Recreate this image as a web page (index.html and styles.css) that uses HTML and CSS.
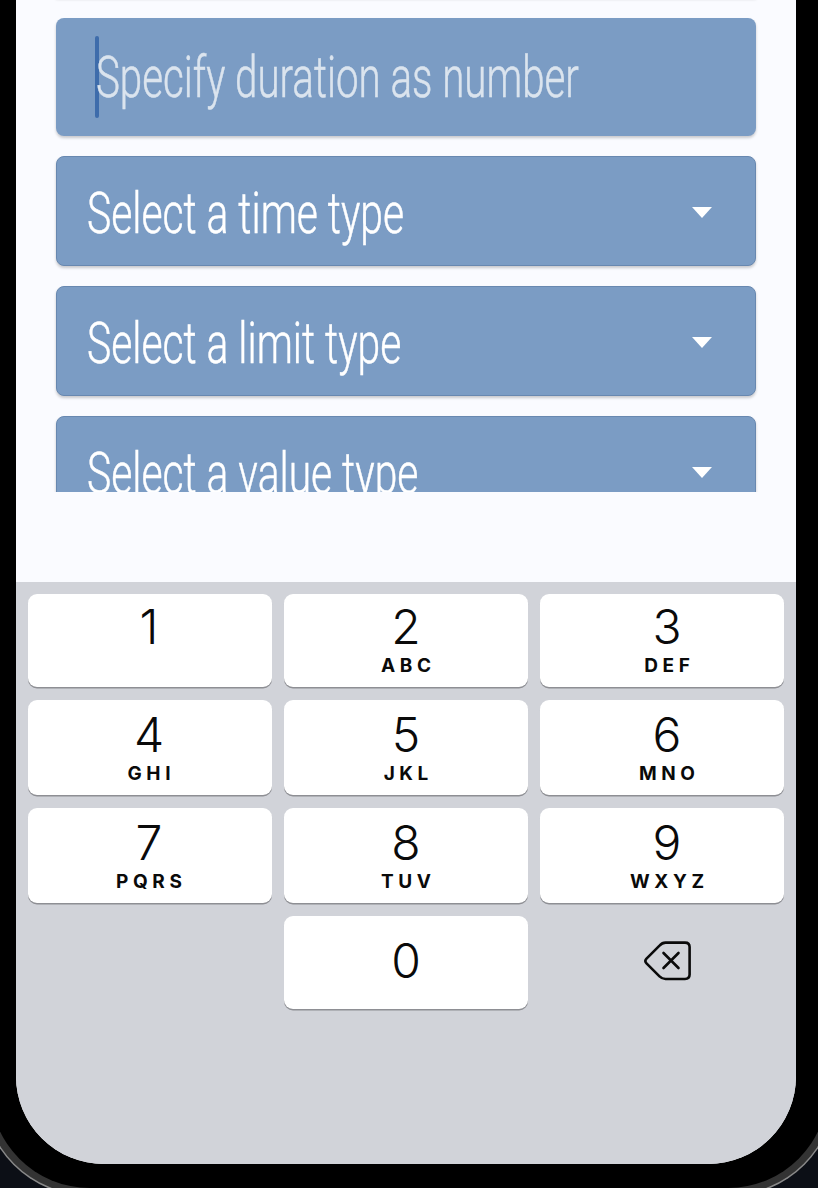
FILE: index.html
```html
<!DOCTYPE html>
<html lang="en">
<head>
    <meta charset="UTF-8">
    <meta name="viewport" content="width=device-width, initial-scale=1.0">
    <title>Limit form</title>
    <link rel="stylesheet" href="styles.css">
</head>
<body>

    <div class="phone">
        <div class="screen">

            <!-- Form fields, cut off above the keyboard -->
            <div class="form-area">
                <div class="field-prev"></div>
                <div class="field field-input">
                    <span class="caret"></span>
                    <span class="field-text placeholder">Specify duration as number</span>
                </div>
                <div class="field field-select">
                    <span class="field-text">Select a time type</span>
                    <span class="arrow"></span>
                </div>
                <div class="field field-select">
                    <span class="field-text">Select a limit type</span>
                    <span class="arrow"></span>
                </div>
                <div class="field field-select">
                    <span class="field-text">Select a value type</span>
                    <span class="arrow"></span>
                </div>
            </div>

            <!-- Number pad -->
            <div class="keyboard">
                <div class="keys">
                    <div class="key"><span class="digit">1</span><span class="letters">&nbsp;</span></div>
                    <div class="key"><span class="digit">2</span><span class="letters">ABC</span></div>
                    <div class="key"><span class="digit">3</span><span class="letters">DEF</span></div>
                    <div class="key"><span class="digit">4</span><span class="letters">GHI</span></div>
                    <div class="key"><span class="digit">5</span><span class="letters">JKL</span></div>
                    <div class="key"><span class="digit">6</span><span class="letters">MNO</span></div>
                    <div class="key"><span class="digit">7</span><span class="letters">PQRS</span></div>
                    <div class="key"><span class="digit">8</span><span class="letters">TUV</span></div>
                    <div class="key"><span class="digit">9</span><span class="letters">WXYZ</span></div>
                    <div class="key-blank"></div>
                    <div class="key key-zero"><span class="digit">0</span></div>
                    <div class="key-blank key-delete">
                        <svg width="48" height="40" viewBox="0 0 48 40" fill="none" stroke="#0a0a0a" stroke-width="2.6" stroke-linejoin="round" stroke-linecap="round">
                            <path d="M2.5 17.6 L15.5 4.6 Q18.2 1.6 21.5 1.6 L41 1.6 Q45.6 1.6 45.6 6 L45.6 33.6 Q45.6 38 41 38 L21.5 38 Q18.2 38 15.5 35.4 L2.5 22.4 Q0.2 20 2.5 17.6 Z"/>
                            <path d="M19.5 12 L34.5 27 M34.5 12 L19.5 27"/>
                        </svg>
                    </div>
                </div>
            </div>

        </div>
    </div>

</body>
</html>
```

FILE: styles.css
```css
html, body {
    margin: 0;
    padding: 0;
    height: 100%;
    overflow: hidden;
}

body {
    background-color: #0c0f16;
    font-family: Inter, "Liberation Sans", sans-serif;
}

.phone {
    box-sizing: border-box;
    width: 838px;
    height: 1188px;
    margin-left: -10px;
    padding: 0 32px 24px 26px;
    background-color: #000;
    border-radius: 0 0 100px 100px;
    box-shadow: 0 0 0 7px #333, 0 0 0 8.5px #8a8a8a;
}

.screen {
    display: flex;
    flex-direction: column;
    height: 100%;
    overflow: hidden;
    background-color: #fafbff;
    border-radius: 0 0 88px 88px;
}

.form-area {
    display: flex;
    flex-direction: column;
    gap: 20px;
    box-sizing: border-box;
    height: 492px;
    margin-bottom: 90px;
    padding: 0 40px;
    overflow: hidden;
}

.field-prev {
    flex: none;
    height: 2px;
    margin-top: -4px;
    background-color: #fafbff;
    box-shadow: 0 1px 3px rgba(0, 0, 0, 0.25);
}

.field {
    flex: none;
    position: relative;
    display: flex;
    align-items: center;
    box-sizing: border-box;
    padding-left: 30px;
    background-color: #7b9cc4;
    border-radius: 8px;
    box-shadow: 0 2px 3px rgba(0, 0, 0, 0.2);
}

.field-input {
    height: 118px;
}

.field-select {
    height: 110px;
    padding-left: 30px;
    border: 1px solid #6888b0;
}

.field-text {
    display: block;
    font-family: Roboto, "Liberation Sans", sans-serif;
    font-size: 58px;
    font-weight: 300;
    line-height: 1;
    color: #fff;
    white-space: nowrap;
    -webkit-text-stroke: 0.5px currentColor;
    transform: scaleX(0.703);
    transform-origin: left center;
}

.field-select .field-text {
    margin-top: 4px;
}

.field-text.placeholder {
    margin-left: 10px;
    margin-top: 0;
    color: #dbe4ee;
    transform: scaleX(0.694);
}

.caret {
    position: absolute;
    left: 39px;
    top: 18px;
    width: 4px;
    height: 82px;
    background-color: #3e6cab;
    border-radius: 2px;
}

.arrow {
    position: absolute;
    right: 43px;
    top: 50px;
    width: 0;
    height: 0;
    border-left: 10px solid transparent;
    border-right: 10px solid transparent;
    border-top: 11px solid #fff;
}

.keyboard {
    flex-grow: 1;
    padding: 12px;
    background-color: #d1d3d9;
}

.keys {
    display: grid;
    grid-template-columns: repeat(3, 244px);
    grid-template-rows: 93px 95px 95px 93px;
    column-gap: 12px;
    row-gap: 13px;
}

.key {
    display: flex;
    flex-direction: column;
    align-items: center;
    justify-content: flex-end;
    padding-bottom: 11px;
    background-color: #fff;
    border-radius: 9px;
    box-shadow: 0 1.5px 0 #8e8f94;
    color: #0a0a0a;
}

/* digits are not quite centred in the outer columns */
.key:nth-child(3n) {
    padding-left: 10px;
}

.key:nth-child(3n+1) {
    padding-right: 2px;
}

.digit {
    font-size: 48px;
    font-weight: 350;
    line-height: 40px;
    margin-bottom: 3px;
}

.letters {
    margin-top: 6px;
    font-size: 19px;
    font-weight: 700;
    line-height: 20px;
    letter-spacing: 4.6px;
    padding-left: 4.6px;
}

.key-zero {
    justify-content: flex-start;
    padding: 25px 0 0;
}

.key-delete {
    display: flex;
    align-items: center;
    justify-content: center;
    padding: 0 0 4px 12px;
}
```
